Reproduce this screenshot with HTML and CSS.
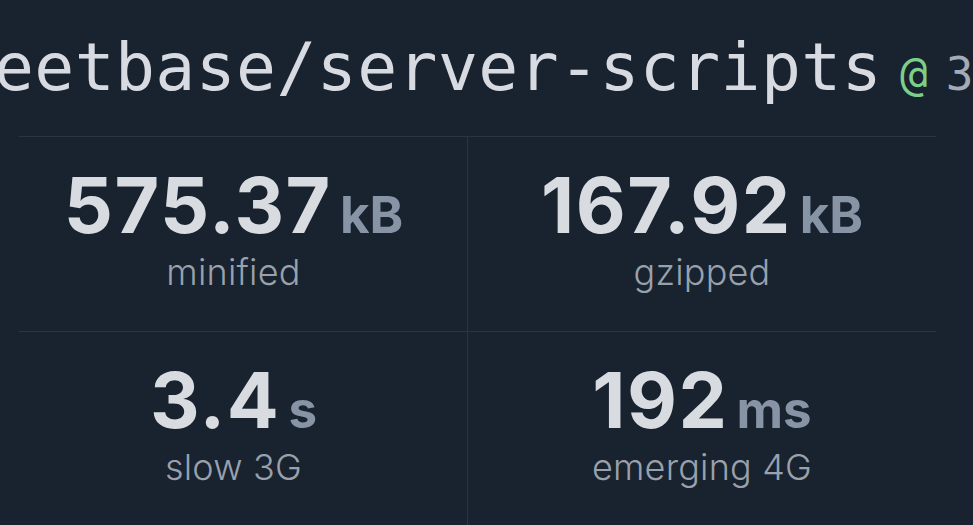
FILE: index.html
```html
<!DOCTYPE html>
<html>
<head>
<meta charset="utf-8">
<link rel="stylesheet" href="styles.css">
</head>
<body>
<header class="title">
  <span class="name">@fleetbase/server-scripts</span><span class="at">@</span><span class="ver">3.0.0</span>
</header>
<section class="stats">
  <div class="divider"></div>
  <div class="stat left">
    <div class="value"><span class="num">575.37</span><span class="unit">kB</span></div>
    <div class="label">minified</div>
  </div>
  <div class="stat">
    <div class="value"><span class="num">167.92</span><span class="unit">kB</span></div>
    <div class="label">gzipped</div>
  </div>
  <div class="divider"></div>
  <div class="stat left">
    <div class="value"><span class="num">3.4</span><span class="unit">s</span></div>
    <div class="label">slow 3G</div>
  </div>
  <div class="stat">
    <div class="value"><span class="num">192</span><span class="unit">ms</span></div>
    <div class="label">emerging 4G</div>
  </div>
</section>
</body>
</html>
```
FILE: styles.css
```css
html, body {
  margin: 0;
  padding: 0;
  background: #19222f;
  overflow: hidden;
  height: 525px;
}
body {
  font-family: Inter, "Noto Sans", sans-serif;
}
.title {
  display: flex;
  justify-content: center;
  align-items: baseline;
  white-space: nowrap;
  height: 102px;
  padding-top: 34px;
  font-family: "DejaVu Sans Mono", monospace;
  font-size: 66.4px;
  line-height: 66px;
  color: #d7dae0;
}
.title .name {
  letter-spacing: 0.4px;
}
.title .at {
  font-size: 46px;
  color: #7ccf8b;
  margin-left: 18px;
  margin-right: 18px;
}
.title .ver {
  font-size: 46px;
  color: #a3abb6;
  padding-right: 16px;
}
.stats {
  width: 936px;
  display: grid;
  grid-template-columns: 468px 468px;
}
.divider {
  grid-column: 1 / -1;
  height: 1px;
  margin-left: 19px;
  background: #2a3443;
}
.stat {
  display: flex;
  flex-direction: column;
  align-items: center;
  padding: 30px 0 40px;
  height: 194px;
  box-sizing: border-box;
}
.stat.left {
  border-right: 1px solid #2a3443;
}
.value {
  display: flex;
  align-items: baseline;
  gap: 8px;
  line-height: 77px;
}
.num {
  font-size: 77px;
  font-weight: 700;
  letter-spacing: 1.5px;
  color: #d8dbe0;
}
.unit {
  font-size: 51px;
  font-weight: 700;
  color: #8794a6;
}
.label {
  margin-top: 0;
  font-size: 36px;
  line-height: 38px;
  font-weight: 300;
  letter-spacing: 0.2px;
  color: #98a1ac;
}
```
